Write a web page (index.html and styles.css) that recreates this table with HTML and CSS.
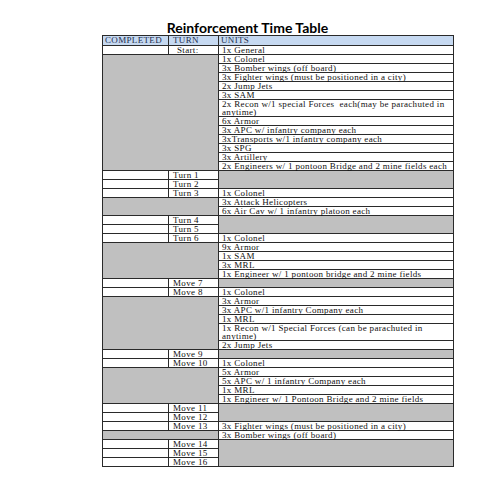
FILE: index.html
```
<!DOCTYPE html>
<html>
<head>
<meta charset="utf-8">
<link rel="stylesheet" href="styles.css">
</head>
<body>
<div class="page">
<h1 class="title">Reinforcement Time Table</h1>
<table class="tt">
<colgroup><col class="c1"><col class="c2"><col class="c3"></colgroup>
<tr class="hd"><td>COMPLETED</td><td>TURN</td><td>UNITS</td></tr>
<tr><td></td><td class="turn start">Start:</td><td>1x General</td></tr>
<tr><td class="g" colspan="2" rowspan="12"></td><td>1x Colonel</td></tr>
<tr><td>3x Bomber wings (off board)</td></tr>
<tr><td>3x Fighter wings (must be positioned in a city)</td></tr>
<tr><td>2x Jump Jets</td></tr>
<tr><td>3x SAM</td></tr>
<tr><td>2x Recon w/1 special Forces&nbsp; each(may be parachuted in anytime)</td></tr>
<tr><td>6x Armor</td></tr>
<tr><td>3x APC w/ infantry company each</td></tr>
<tr><td>3xTransports w/1 infantry company each</td></tr>
<tr><td>3x SPG</td></tr>
<tr><td>3x Artillery</td></tr>
<tr><td>2x Engineers w/ 1 pontoon Bridge and 2 mine fields each</td></tr>
<tr><td></td><td class="turn">Turn 1</td><td class="g" rowspan="2"></td></tr>
<tr><td></td><td class="turn">Turn 2</td></tr>
<tr><td></td><td class="turn">Turn 3</td><td>1x Colonel</td></tr>
<tr><td class="g" colspan="2" rowspan="2"></td><td>3x Attack Helicopters</td></tr>
<tr><td>6x Air Cav w/ 1 infantry platoon each</td></tr>
<tr><td></td><td class="turn">Turn 4</td><td class="g" rowspan="2"></td></tr>
<tr><td></td><td class="turn">Turn 5</td></tr>
<tr><td></td><td class="turn">Turn 6</td><td>1x Colonel</td></tr>
<tr><td class="g" colspan="2" rowspan="4"></td><td>9x Armor</td></tr>
<tr><td>1x SAM</td></tr>
<tr><td>3x MRL</td></tr>
<tr><td>1x Engineer w/ 1 pontoon bridge and 2 mine fields</td></tr>
<tr><td></td><td class="turn">Move 7</td><td class="g"></td></tr>
<tr><td></td><td class="turn">Move 8</td><td>1x Colonel</td></tr>
<tr><td class="g" colspan="2" rowspan="5"></td><td>3x Armor</td></tr>
<tr><td>3x APC w/1 infantry Company each</td></tr>
<tr><td>1x MRL</td></tr>
<tr><td>1x Recon w/1 Special Forces (can be parachuted in anytime)</td></tr>
<tr><td>2x Jump Jets</td></tr>
<tr><td></td><td class="turn">Move 9</td><td class="g"></td></tr>
<tr><td></td><td class="turn">Move 10</td><td>1x Colonel</td></tr>
<tr><td class="g" colspan="2" rowspan="4"></td><td>5x Armor</td></tr>
<tr><td>5x APC w/ 1 infantry Company each</td></tr>
<tr><td>1x MRL</td></tr>
<tr><td>1x Engineer w/ 1 Pontoon Bridge and 2 mine fields</td></tr>
<tr><td></td><td class="turn">Move 11</td><td class="g" rowspan="2"></td></tr>
<tr><td></td><td class="turn">Move 12</td></tr>
<tr><td></td><td class="turn">Move 13</td><td>3x Fighter wings (must be positioned in a city)</td></tr>
<tr><td class="g" colspan="2"></td><td>3x Bomber wings (off board)</td></tr>
<tr><td></td><td class="turn">Move 14</td><td class="g" rowspan="3"></td></tr>
<tr><td></td><td class="turn">Move 15</td></tr>
<tr><td></td><td class="turn">Move 16</td></tr>
</table>
</div>
</body>
</html>
```
FILE: styles.css
```
html, body {
  margin: 0;
  padding: 0;
  background: #ffffff;
}
.page {
  width: 495px;
  height: 495px;
  display: flex;
  flex-direction: column;
}
.title {
  margin: 0;
  padding-top: 20px;
  height: 15px;
  line-height: 15px;
  font-family: Lato, "Liberation Sans", sans-serif;
  font-weight: 700;
  font-size: 14px;
  text-align: center;
  color: #000;
}
.tt {
  margin-left: 102px;
  margin-top: 0;
  width: 351px;
  border-collapse: collapse;
  table-layout: fixed;
  font-family: "Liberation Serif", "Times New Roman", serif;
  font-size: 9px;
  letter-spacing: 0.33px;
  line-height: 8px;
  color: #111;
  border: 1.5px solid #3a3a3a;
}
.c1 { width: 66px; }
.c2 { width: 50px; }
.c3 { width: 235px; }
.tt td {
  border: 1px solid #2a2a2a;
  padding: 0 0 0 3px;
  vertical-align: top;
  white-space: normal;
}
.tt .hd td {
  background: #c6d9f1;
  color: #1d2f4f;
  line-height: 9px;
  padding-left: 2px;
}
.tt .hd td:nth-child(2),
.tt td.turn {
  padding-left: 4px;
}
.tt td.start {
  padding-left: 8px;
}
.tt td.g {
  background: #c0c0c0;
}
```
